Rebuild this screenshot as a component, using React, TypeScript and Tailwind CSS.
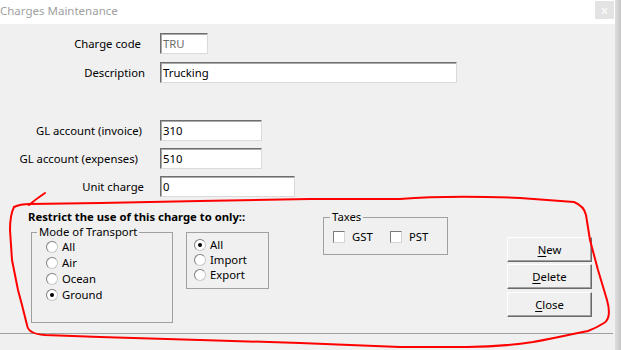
import React from "react";

function Field({ label, pr, width, value, gray, mt }: { label: string; pr: string; width: string; value: string; gray?: boolean; mt: string }) {
  return (
    <div className={`flex h-[21px] items-center ${mt}`}>
      <div className={`w-[160px] text-right leading-[15px] ${pr}`}>{label}</div>
      <div
        className={`flex h-[21px] items-center border border-t-[#6e6e6e] border-l-[#6e6e6e] border-r-[#dadada] border-b-[#dadada] bg-white pl-[2px] shadow-[inset_1px_1px_0_#a9a9a9] ${width} ${gray ? "text-[#6d6d6d]" : "text-black"}`}
      >
        <span className="leading-[15px]">{value}</span>
      </div>
    </div>
  );
}

function Radio({ label, checked, h }: { label: string; checked?: boolean; h: string }) {
  return (
    <div className={`flex items-center ${h}`}>
      <div className="flex h-[12px] w-[12px] shrink-0 items-center justify-center rounded-full border border-t-[#7f7f7f] border-l-[#7f7f7f] border-r-[#c8c8c8] border-b-[#c8c8c8] bg-white">
        {checked && <div className="h-[4px] w-[4px] rounded-full bg-black" />}
      </div>
      <span className="ml-[4px] leading-[14px]">{label}</span>
    </div>
  );
}

function Check({ label }: { label: string }) {
  return (
    <div className="flex h-[16px] w-[57px] items-center">
      <div className="h-[12px] w-[12px] shrink-0 border border-t-[#7a7a7a] border-l-[#7a7a7a] border-r-[#d4d4d4] border-b-[#d4d4d4] bg-white" />
      <span className="ml-[7px] leading-[14px]">{label}</span>
    </div>
  );
}

function Btn({ u, rest, mt }: { u: string; rest: string; mt: string }) {
  return (
    <div
      className={`flex h-[25px] w-[85px] items-center justify-center border border-t-white border-l-white border-r-[#696969] border-b-[#696969] bg-[#f0f0f0] shadow-[inset_-1px_-1px_0_#a0a0a0] ${mt}`}
    >
      <span className="leading-[15px]">
        <span className="underline underline-offset-2">{u}</span>
        {rest}
      </span>
    </div>
  );
}

export default function App() {
  return (
    <div className="relative flex h-[350px] w-[621px] overflow-hidden bg-[#f0f0f0] font-['Noto_Sans',sans-serif] text-[11.3px] text-black">
      <div className="flex w-[615px] flex-col">
        <div className="flex h-[24px] items-start justify-between bg-white">
          <span className="mt-[3px] text-[11.5px] leading-[16px] text-[#a0a0a0]">Charges Maintenance</span>
          <div className="mr-[1px] mt-[1px] flex h-[18px] w-[19px] items-center justify-center bg-[#e3e3e3] text-[11px] font-bold leading-[12px] text-[#f7f7f7]">
            x
          </div>
        </div>
        <div className="flex flex-1 flex-col pt-[9px]">
          <Field label="Charge code" pr="pr-[19px]" width="w-[48px]" value="TRU" gray mt="mt-0" />
          <Field label="Description" pr="pr-[15px]" width="w-[297px]" value="Trucking" mt="mt-[8px]" />
          <Field label="GL account (invoice)" pr="pr-[18px]" width="w-[102px]" value="310" mt="mt-[37px]" />
          <Field label="GL account (expenses)" pr="pr-[22px]" width="w-[102px]" value="510" mt="mt-[7px]" />
          <Field label="Unit charge" pr="pr-[16px]" width="w-[135px]" value="0" mt="mt-[7px]" />

          <div className="mt-[11px] flex items-start">
            <div className="ml-[28px] flex w-[241px] flex-col">
              <div className="h-[17px] whitespace-nowrap font-bold leading-[17px]">Restrict the use of this charge to only::</div>
              <div className="flex items-start">
                <fieldset className="ml-[3px] h-[98px] w-[142px] border border-[#a0a0a0] pl-[14px]">
                  <legend className="ml-[-9px] px-[2px] leading-[14px]">Mode of Transport</legend>
                  <Radio label="All" h="h-[16px]" />
                  <Radio label="Air" h="h-[16px]" />
                  <Radio label="Ocean" h="h-[16px]" />
                  <Radio label="Ground" checked h="h-[16px]" />
                </fieldset>
                <div className="ml-[13px] mt-[7px] h-[57px] w-[83px] border border-[#a0a0a0] pl-[7px] pt-[4px]">
                  <Radio label="All" checked h="h-[15px]" />
                  <Radio label="Import" h="h-[15px]" />
                  <Radio label="Export" h="h-[15px]" />
                </div>
              </div>
            </div>
            <fieldset className="ml-[54px] mt-[2px] h-[45px] w-[125px] border border-[#a0a0a0] pl-[9px]">
              <legend className="ml-[-3px] px-[2px] leading-[14px]">Taxes</legend>
              <div className="flex pt-[5px]">
                <Check label="GST" />
                <Check label="PST" />
              </div>
            </fieldset>
            <div className="ml-[59px] mt-[29px] flex w-[85px] flex-col">
              <Btn u="N" rest="ew" mt="mt-0" />
              <Btn u="D" rest="elete" mt="mt-[2px]" />
              <Btn u="C" rest="lose" mt="mt-[3px]" />
            </div>
          </div>
          <div className="mt-[10px] h-[1px] w-[613px] bg-[#a0a0a0]" />
        </div>
      </div>
      <div className="w-[6px] bg-gradient-to-r from-[#dedede] to-[#c6c6c6]" />
      <svg className="pointer-events-none absolute left-0 top-0" width="621" height="350" viewBox="0 0 621 350">
        <path
          d="M45 193 Q36 199 29 205"
          fill="none"
          stroke="#ff0000"
          strokeWidth="2"
          strokeLinecap="round"
        />
        <path
          d="M14 207 Q20 204 30 204 L100 203 L200 201 L310 199 L400 199 Q450 195 520 198 L574 202 Q584 206 586 215 L590 240 L598 270 L607 300 Q612 318 604 323 Q596 328 588 331 L573 334 Q550 339 533 342 Q500 347 467 347 L400 347 L300 343 L200 340 L100 337 L45 335 Q28 334 27 325 L22 305 L18 290 L12 260 L10 230 Q10 215 14 207"
          fill="none"
          stroke="#ff0000"
          strokeWidth="2"
          strokeLinejoin="round"
          strokeLinecap="round"
        />
      </svg>
    </div>
  );
}
